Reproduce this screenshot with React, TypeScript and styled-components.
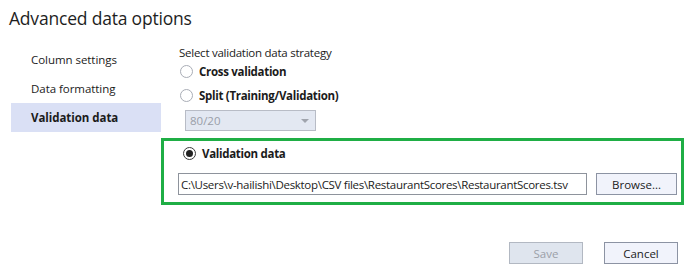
import styled, { createGlobalStyle } from 'styled-components';

const Global = createGlobalStyle`
  html, body {
    margin: 0;
    padding: 0;
    background: #ffffff;
  }
  body {
    font-family: "Open Sans", "Noto Sans", "Liberation Sans", sans-serif;
    color: #1b1b1b;
  }
`;

const Dialog = styled.div`
  width: 689px;
  height: 276px;
  display: flex;
  flex-direction: column;
  box-sizing: border-box;
  overflow: hidden;
`;

const Title = styled.h1`
  margin: 6px 0 0 9px;
  height: 28px;
  font-size: 17.5px;
  font-weight: 400;
  letter-spacing: -0.2px;
  color: #1e1e1e;
`;

const Body = styled.div`
  display: flex;
  margin-top: 11px;
  height: 168px;
`;

const Sidebar = styled.nav`
  flex-shrink: 0;
  width: 150px;
  margin-left: 11px;
  display: flex;
  flex-direction: column;
`;

const NavItem = styled.div<{ $active?: boolean }>`
  height: 29px;
  display: flex;
  align-items: center;
  padding-left: 20px;
  font-size: 11.5px;
  letter-spacing: -0.05px;
  font-weight: ${p => (p.$active ? 700 : 400)};
  background: ${p => (p.$active ? '#dae0f5' : 'transparent')};
  color: #1b1b1b;
`;

const Content = styled.div`
  flex: 1;
  display: flex;
  flex-direction: column;
`;

const Caption = styled.div`
  font-size: 11.5px;
  letter-spacing: -0.25px;
  margin-left: 18px;
  height: 15px;
  line-height: 15px;
`;

const RadioRow = styled.label`
  display: flex;
  align-items: center;
  gap: 6px;
  height: 24px;
  margin-left: 19px;
  font-size: 11.5px;
  letter-spacing: -0.3px;
  font-weight: 700;
  color: #1b1b1b;
  margin-top: -1px;
  margin-bottom: 1px;
`;

const RadioCircle = styled.span<{ $checked?: boolean }>`
  width: 11px;
  height: 11px;
  border-radius: 50%;
  border: 1px solid ${p => (p.$checked ? '#3a3a3a' : '#a9adb6')};
  background: #ffffff;
  display: inline-flex;
  align-items: center;
  justify-content: center;
  box-sizing: content-box;

  &::after {
    content: '';
    width: 7px;
    height: 7px;
    border-radius: 50%;
    background: ${p => (p.$checked ? '#222222' : 'transparent')};
  }
`;

const Select = styled.div`
  margin: 2px 0 0 24px;
  width: 131px;
  height: 21px;
  box-sizing: border-box;
  border: 1px solid #b8bcc6;
  background: #e3e8f2;
  display: flex;
  align-items: center;
  justify-content: space-between;
  padding: 0 6px 0 4px;
  font-size: 11.5px;
  color: #9a9ea8;
`;

const Caret = styled.span`
  width: 0;
  height: 0;
  border-left: 4px solid transparent;
  border-right: 4px solid transparent;
  border-top: 4px solid #a0a4ad;
`;

const Highlight = styled.div`
  margin-top: 7px;
  width: 523px;
  height: 67px;
  box-sizing: border-box;
  border: 3px solid #1fae45;
  padding: 1px 0 0 0;
  display: flex;
  flex-direction: column;
`;

const FileRow = styled.div`
  display: flex;
  align-items: center;
  margin: 7px 0 0 14px;
  gap: 9px;
`;

const PathInput = styled.div`
  width: 409px;
  height: 22px;
  box-sizing: border-box;
  border: 1px solid #8e939c;
  background: #ffffff;
  font-size: 11.5px;
  display: flex;
  align-items: center;
  padding-left: 2px;
  white-space: nowrap;
  overflow: hidden;
  letter-spacing: -0.3px;
`;

const Button = styled.button<{ $disabled?: boolean; $w?: number }>`
  width: ${p => p.$w ?? 74}px;
  height: 22px;
  box-sizing: border-box;
  border: 1px solid ${p => (p.$disabled ? '#b2b8c2' : '#8c93a3')};
  background: ${p => (p.$disabled ? '#dfe5ee' : '#f1f3fb')};
  color: ${p => (p.$disabled ? '#9ba0a8' : '#1b1b1b')};
  font-family: inherit;
  font-size: 11.5px;
  padding: 0;
  cursor: default;
`;

const Footer = styled.div`
  display: flex;
  justify-content: flex-end;
  gap: 21px;
  margin-top: 29px;
  padding-right: 11px;
`;

export default function App() {
  return (
    <Dialog>
      <Global />
      <Title>Advanced data options</Title>
      <Body>
        <Sidebar>
          <NavItem>Column settings</NavItem>
          <NavItem>Data formatting</NavItem>
          <NavItem $active>Validation data</NavItem>
        </Sidebar>
        <Content>
          <Caption>Select validation data strategy</Caption>
          <RadioRow>
            <RadioCircle />
            Cross validation
          </RadioRow>
          <RadioRow>
            <RadioCircle />
            Split (Training/Validation)
          </RadioRow>
          <Select>
            80/20
            <Caret />
          </Select>
          <Highlight>
            <RadioRow>
              <RadioCircle $checked />
              Validation data
            </RadioRow>
            <FileRow>
              <PathInput>C:\Users\v-hailishi\Desktop\CSV files\RestaurantScores\RestaurantScores.tsv</PathInput>
              <Button $w={81}>Browse...</Button>
            </FileRow>
          </Highlight>
        </Content>
      </Body>
      <Footer>
        <Button $disabled>Save</Button>
        <Button>Cancel</Button>
      </Footer>
    </Dialog>
  );
}
